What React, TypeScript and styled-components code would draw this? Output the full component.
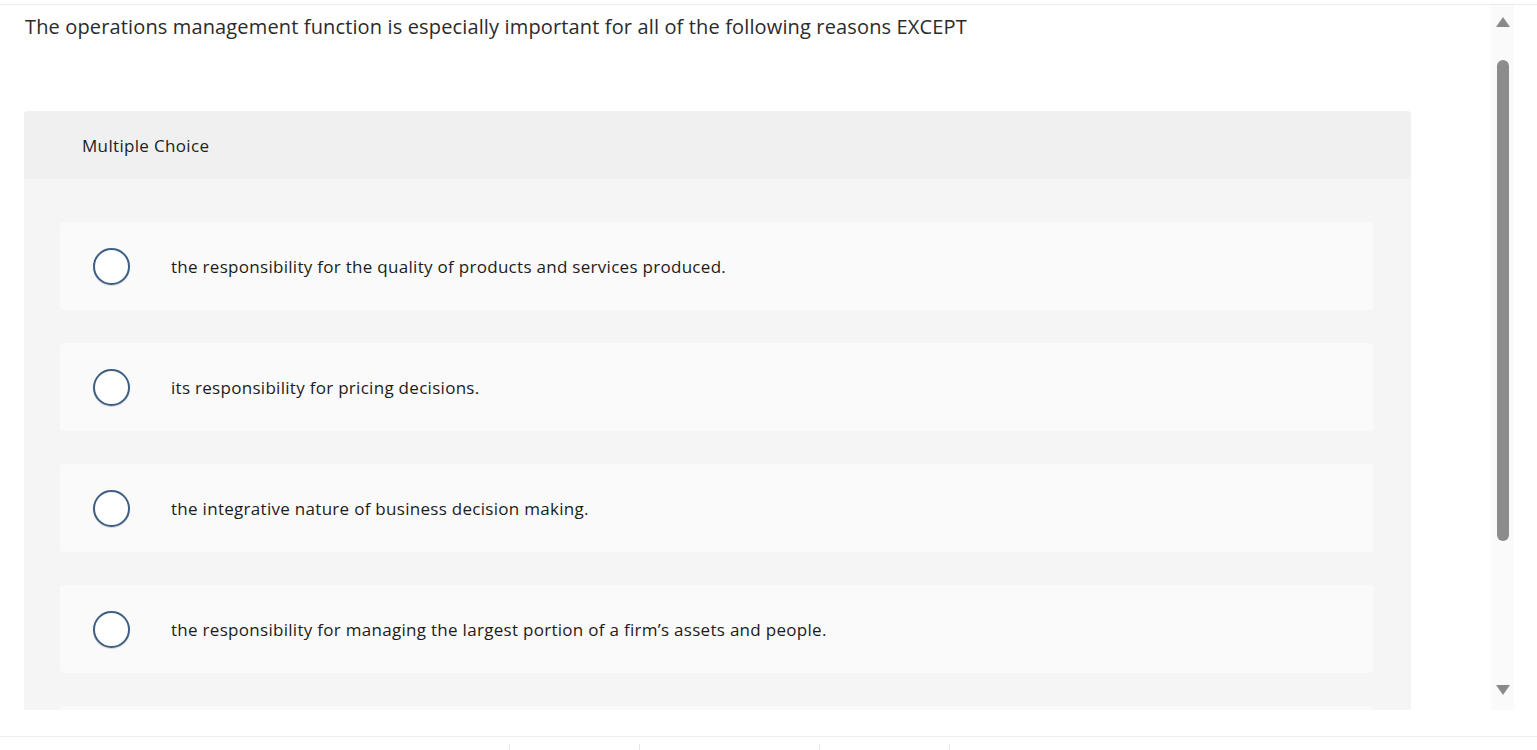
import React from 'react';
import styled, { createGlobalStyle } from 'styled-components';

const GlobalStyle = createGlobalStyle`
  html, body {
    margin: 0;
    padding: 0;
    background: #fff;
    font-family: "Open Sans", Roboto, Arial, sans-serif;
  }
`;

const Page = styled.div`
  width: 1537px;
  height: 750px;
  padding-top: 4px;
  box-sizing: border-box;
  display: flex;
  flex-direction: column;
  overflow: hidden;
`;

const ScrollArea = styled.div`
  height: 705px;
  border-top: 1px solid #ececec;
  display: flex;
`;

const Content = styled.div`
  flex: 1;
  padding-left: 24px;
  overflow: hidden;
`;

const Question = styled.p`
  margin: 9px 0 0 1px;
  font-size: 20px;
  line-height: 26px;
  letter-spacing: 0.14px;
  color: #2b2b2b;
`;

const Card = styled.section`
  width: 1387px;
  margin-top: 71px;
  background: #f5f5f5;
  border-radius: 4px 4px 0 0;
`;

const CardHeader = styled.div`
  height: 68px;
  display: flex;
  align-items: center;
  padding-left: 58px;
  background: #f0f0f0;
  border-radius: 4px 4px 0 0;
  font-size: 17px;
  letter-spacing: 0.33px;
  color: #222;
`;

const Options = styled.div`
  display: flex;
  flex-direction: column;
  gap: 33px;
  padding: 43px 38px 40px 36px;
`;

const Option = styled.label`
  height: 88px;
  display: flex;
  align-items: center;
  padding-left: 33px;
  background: #fafafa;
  border-radius: 4px;
  cursor: pointer;
`;

const Radio = styled.span`
  width: 37px;
  height: 37px;
  box-sizing: border-box;
  border: 2px solid #3f5f84;
  border-radius: 50%;
  background: #fff;
  box-shadow: 0 1px 1px rgba(0, 0, 0, 0.15);
  flex-shrink: 0;
`;

const OptionText = styled.span`
  margin-left: 41px;
  font-size: 17px;
  letter-spacing: 0.29px;
  color: #1c1c1c;
`;

const ScrollTrack = styled.div`
  width: 23px;
  margin-right: 23px;
  background: #fafafa;
  display: flex;
  flex-direction: column;
  align-items: center;
`;

const Arrow = styled.svg`
  width: 14px;
  height: 10px;
  flex-shrink: 0;
`;

const Thumb = styled.div`
  width: 12px;
  height: 481px;
  margin: 33px 0 0;
  background: #8c8c8c;
  border-radius: 6px;
`;

const Spacer = styled.div`
  flex: 1;
`;

const Footer = styled.div`
  height: 41px;
`;

const FooterRule = styled.div`
  margin-top: 26px;
  border-top: 1px solid #eeeeee;
  display: flex;
`;

const Tick = styled.span<{ $left: number }>`
  width: 1px;
  height: 7px;
  margin-top: 7px;
  margin-left: ${(p) => p.$left}px;
  background: #e6e6e6;
`;

const choices = [
  'the responsibility for the quality of products and services produced.',
  'its responsibility for pricing decisions.',
  'the integrative nature of business decision making.',
  'the responsibility for managing the largest portion of a firm\u2019s assets and people.',
  '',
];

const tickGaps = [509, 129, 179, 129];

const App = () => {
  return (
    <Page>
      <GlobalStyle />
      <ScrollArea>
        <Content>
          <Question>
            The operations management function is especially important for all of the following reasons EXCEPT
          </Question>
          <Card>
            <CardHeader>Multiple Choice</CardHeader>
            <Options>
              {choices.map((text, i) => (
                <Option key={i}>
                  <Radio />
                  <OptionText>{text}</OptionText>
                </Option>
              ))}
            </Options>
          </Card>
        </Content>
        <ScrollTrack>
          <Arrow viewBox="0 0 14 10" style={{ marginTop: 12 }}>
            <path d="M7 0 L14 10 L0 10 Z" fill="#8a8a8a" />
          </Arrow>
          <Thumb />
          <Spacer />
          <Arrow viewBox="0 0 14 10" style={{ marginBottom: 15 }}>
            <path d="M0 0 L14 0 L7 10 Z" fill="#8a8a8a" />
          </Arrow>
        </ScrollTrack>
      </ScrollArea>
      <Footer>
        <FooterRule>
          {tickGaps.map((g, i) => (
            <Tick key={i} $left={g} />
          ))}
        </FooterRule>
      </Footer>
    </Page>
  );
};

export default App;
